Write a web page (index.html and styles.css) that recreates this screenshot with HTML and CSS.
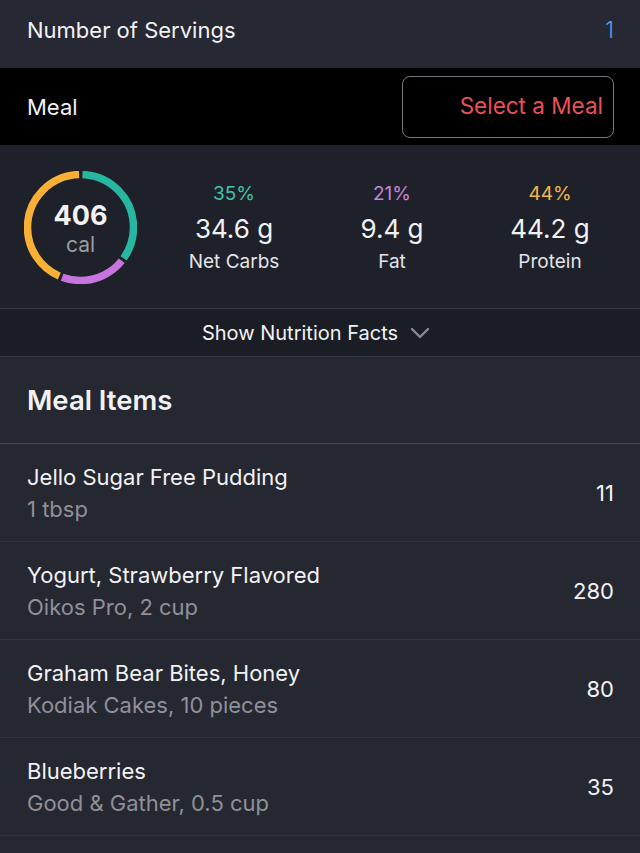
FILE: index.html
```html
<!DOCTYPE html>
<html lang="en">
<head>
    <meta charset="UTF-8">
    <meta name="viewport" content="width=device-width, initial-scale=1.0">
    <title>Meal</title>
    <link rel="stylesheet" href="styles.css">
</head>
<body>
    <div class="row servings">
        <span>Number of Servings</span>
        <span class="servings-value">1</span>
    </div>

    <div class="row meal">
        <span>Meal</span>
        <button class="meal-select">Select a Meal</button>
    </div>

    <div class="macros">
        <div class="ring">
            <svg width="113" height="113" viewBox="0 0 113 113">
                <!-- r=53, circumference 333 -->
                <circle cx="56.5" cy="56.5" r="53" fill="none" stroke="#27b7a1" stroke-width="7.5"
                    stroke-dasharray="114 333" stroke-dashoffset="-2" transform="rotate(-90 56.5 56.5)"/>
                <circle cx="56.5" cy="56.5" r="53" fill="none" stroke="#c873e0" stroke-width="7.5"
                    stroke-dasharray="66 333" stroke-dashoffset="-119" transform="rotate(-90 56.5 56.5)"/>
                <circle cx="56.5" cy="56.5" r="53" fill="none" stroke="#f8b134" stroke-width="7.5"
                    stroke-dasharray="143 333" stroke-dashoffset="-188" transform="rotate(-90 56.5 56.5)"/>
            </svg>
            <div class="ring-label">
                <div class="ring-cal">406</div>
                <div class="ring-unit">cal</div>
            </div>
        </div>
        <div class="macro-cols">
            <div class="macro">
                <div class="macro-pct carbs">35%</div>
                <div class="macro-amt">34.6 g</div>
                <div class="macro-name">Net Carbs</div>
            </div>
            <div class="macro">
                <div class="macro-pct fat">21%</div>
                <div class="macro-amt">9.4 g</div>
                <div class="macro-name">Fat</div>
            </div>
            <div class="macro">
                <div class="macro-pct protein">44%</div>
                <div class="macro-amt">44.2 g</div>
                <div class="macro-name">Protein</div>
            </div>
        </div>
    </div>

    <div class="facts-toggle">
        <span>Show Nutrition Facts</span>
        <svg width="20" height="12" viewBox="0 0 20 12">
            <path d="M2 2 L10 10 L18 2" fill="none" stroke="#8a8b92" stroke-width="2.4" stroke-linecap="round" stroke-linejoin="round"/>
        </svg>
    </div>

    <div class="section-title">Meal Items</div>

    <ul class="items">
        <li class="item">
            <div>
                <div class="item-name">Jello Sugar Free Pudding</div>
                <div class="item-sub">1 tbsp</div>
            </div>
            <div class="item-cal">11</div>
        </li>
        <li class="item">
            <div>
                <div class="item-name">Yogurt, Strawberry Flavored</div>
                <div class="item-sub">Oikos Pro, 2 cup</div>
            </div>
            <div class="item-cal">280</div>
        </li>
        <li class="item">
            <div>
                <div class="item-name">Graham Bear Bites, Honey</div>
                <div class="item-sub">Kodiak Cakes, 10 pieces</div>
            </div>
            <div class="item-cal">80</div>
        </li>
        <li class="item">
            <div>
                <div class="item-name">Blueberries</div>
                <div class="item-sub">Good &amp; Gather, 0.5 cup</div>
            </div>
            <div class="item-cal">35</div>
        </li>
    </ul>
</body>
</html>
```

FILE: styles.css
```css
body {
    margin: 0;
    background-color: #252731;
    color: #f2f2f4;
    font-family: Inter, "Noto Sans", sans-serif;
    -webkit-font-smoothing: antialiased;
}
.row {
    display: flex;
    align-items: center;
    justify-content: space-between;
    padding: 0 26px 0 27px;
    font-size: 22px;
}
.servings {
    height: 68px;
    background-color: #262833;
    padding-bottom: 8px;
    box-sizing: border-box;
}
.servings-value {
    color: #5b9ef0;
    font-size: 23px;
    font-weight: 300;
}
.meal {
    height: 77px;
    background-color: #000;
    padding-right: 26px;
}
.meal-select {
    width: 212px;
    height: 62px;
    background: none;
    border: 1.5px solid #77777b;
    border-radius: 8px;
    color: #ee4f59;
    font-family: inherit;
    font-size: 22.5px;
    text-align: right;
    padding: 0 10px 2px 0;
}
.macros {
    display: flex;
    align-items: center;
    height: 163px;
    background-color: #1f212a;
    border-bottom: 1px solid #373943;
}
.ring {
    position: relative;
    width: 113px;
    height: 113px;
    margin: 2px 18px 0 24px;
}
.ring svg {
    display: block;
}
.ring-label {
    position: absolute;
    inset: 0;
    display: flex;
    flex-direction: column;
    align-items: center;
    justify-content: center;
    padding-top: 2px;
}
.ring-cal {
    font-size: 27px;
    font-weight: 700;
    line-height: 32px;
}
.ring-unit {
    font-size: 21px;
    color: #9c9ca3;
    line-height: 26px;
}
.macro-cols {
    display: grid;
    grid-template-columns: repeat(3, 158px);
}
.macro {
    text-align: center;
}
.macro-pct {
    font-size: 19px;
    line-height: 26px;
}
.carbs { color: #44c2aa; }
.fat { color: #c585d9; }
.protein { color: #f3b547; }
.macro-amt {
    font-size: 26px;
    line-height: 44px;
}
.macro-name {
    font-size: 19px;
    line-height: 22px;
    color: #e4e4e8;
}
.facts-toggle {
    display: flex;
    align-items: center;
    justify-content: center;
    gap: 12px;
    height: 47px;
    background-color: #1b1d25;
    border-bottom: 1px solid #373943;
    font-size: 20px;
    padding-right: 8px;
}
.section-title {
    display: flex;
    align-items: center;
    padding: 0 27px;
    font-size: 27.5px;
    font-weight: 600;
    border-bottom: 1px solid #44464f;
    box-sizing: border-box;
    height: 87px;
}
.items {
    list-style: none;
    margin: 0;
    padding: 0;
}
.item {
    display: flex;
    align-items: center;
    justify-content: space-between;
    height: 97px;
    padding: 0 26px 0 27px;
    border-bottom: 1px solid #30323c;
}
.item-name {
    font-size: 22px;
    line-height: 32px;
}
.item-sub {
    font-size: 22px;
    line-height: 32px;
    color: #8f9098;
}
.item-cal {
    font-size: 22px;
}
```
